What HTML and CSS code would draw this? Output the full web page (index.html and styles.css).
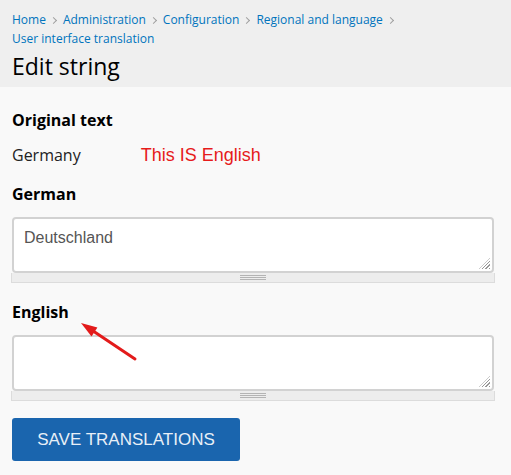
FILE: index.html
```html
<!DOCTYPE html>
<html lang="en">
<head>
  <meta charset="UTF-8">
  <meta name="viewport" content="width=device-width, initial-scale=1.0">
  <title>Edit string</title>
  <link rel="stylesheet" href="styles.css">
</head>
<body>
  <header class="page-header">
    <ol class="breadcrumb">
      <li><a href="#">Home</a></li>
      <li><a href="#">Administration</a></li>
      <li><a href="#">Configuration</a></li>
      <li><a href="#">Regional and language</a></li>
      <li><a href="#">User interface translation</a></li>
    </ol>
    <h1 class="page-title">Edit string</h1>
  </header>

  <main class="content">
    <form class="translate-form">
      <div class="form-item">
        <div class="form-label">Original text</div>
        <div class="source-row">
          <span class="source-text">Germany</span>
          <span class="note">This IS English</span>
        </div>
      </div>

      <div class="form-item">
        <label class="form-label" for="tr-de">German</label>
        <div class="textarea-wrap">
          <textarea id="tr-de" rows="2">Deutschland</textarea>
          <div class="grippie"></div>
        </div>
      </div>

      <div class="form-item">
        <label class="form-label" for="tr-en">English</label>
        <div class="textarea-wrap">
          <textarea id="tr-en" rows="2"></textarea>
          <div class="grippie"></div>
        </div>
      </div>

      <button type="submit" class="button-primary">Save translations</button>
    </form>

    <!-- pointer to the empty English field -->
    <svg class="pointer" width="64" height="46" viewBox="0 0 64 46">
      <line x1="16" y1="12.3" x2="59" y2="41" stroke="#e31b1b" stroke-width="3" stroke-linecap="round"/>
      <polygon points="5,5 15.5,18.6 21.4,9.6" fill="#e31b1b"/>
    </svg>
  </main>
</body>
</html>
```

FILE: styles.css
```css
body {
  margin: 0;
  font-family: "Open Sans", "Liberation Sans", Arial, sans-serif;
  background: #f9f9f9;
  color: #222;
}

.page-header {
  background: #efefef;
  padding: 10px 12px 0;
  height: 77px;
}

.breadcrumb {
  list-style: none;
  margin: 0;
  padding: 0;
  display: flex;
  flex-wrap: wrap;
  font-size: 12px;
  line-height: 19px;
}
.breadcrumb li {
  display: flex;
  align-items: center;
}
.breadcrumb li:not(:last-child)::after {
  content: "";
  width: 4px;
  height: 4px;
  margin: 1px 7px 0 5px;
  border-top: 1.5px solid #a0a0a0;
  border-right: 1.5px solid #a0a0a0;
  transform: rotate(45deg);
}
.breadcrumb a {
  color: #0074bd;
  text-decoration: none;
}

.page-title {
  margin: 3px 0 0;
  font-size: 23px;
  font-weight: 400;
  line-height: 30px;
  color: #000;
}

.content {
  position: relative;
  padding: 23px 17px 20px 12px;
}

.form-item + .form-item {
  margin-top: 19px;
}

.form-label {
  display: block;
  font-size: 16px;
  font-weight: 700;
  line-height: 20px;
  color: #000;
  margin-bottom: 13px;
}

.source-row {
  display: flex;
  align-items: baseline;
  line-height: 20px;
  padding-top: 2px;
}
.source-text {
  font-size: 16px;
  color: #222;
}
.note {
  margin-left: 60px;
  font-family: "Liberation Sans", Arial, sans-serif;
  font-size: 18px;
  color: #e61b1b;
}

.textarea-wrap {
  position: relative;
}
.textarea-wrap::after {
  /* hatched resize corner */
  content: "";
  position: absolute;
  right: 4px;
  bottom: 14px;
  width: 11px;
  height: 11px;
  background: repeating-linear-gradient(135deg, transparent 0 1.6px, #999 1.6px 2.6px);
  clip-path: polygon(100% 0, 100% 100%, 0 100%);
}
.textarea-wrap textarea {
  display: block;
  box-sizing: border-box;
  width: 100%;
  height: 56px;
  margin: 0;
  padding: 10px 10px;
  border: 2px solid #d2d2d2;
  border-radius: 4px;
  background: #fff;
  font-family: "Liberation Sans", Arial, sans-serif;
  font-size: 16px;
  color: #555;
  resize: none;
}
.grippie {
  box-sizing: border-box;
  height: 10px;
  margin: 0 0 0 -1px;
  width: calc(100% + 2px);
  background: #ededed;
  border: 1px solid #dcdcdc;
  border-top: none;
  position: relative;
}
.grippie::before {
  content: "";
  position: absolute;
  left: 50%;
  top: 2px;
  width: 26px;
  height: 5px;
  margin-left: -13px;
  background: repeating-linear-gradient(to bottom, #b4b4b4 0 1px, transparent 1px 2px);
}

.button-primary {
  display: block;
  margin-top: 17px;
  width: 228px;
  height: 43px;
  border: none;
  border-radius: 3px;
  background: #1a65ae;
  color: #e8eff7;
  font-family: "Liberation Sans", Arial, sans-serif;
  font-size: 17px;
  text-transform: uppercase;
  cursor: pointer;
}

.pointer {
  position: absolute;
  left: 76px;
  top: 231px;
}
```
